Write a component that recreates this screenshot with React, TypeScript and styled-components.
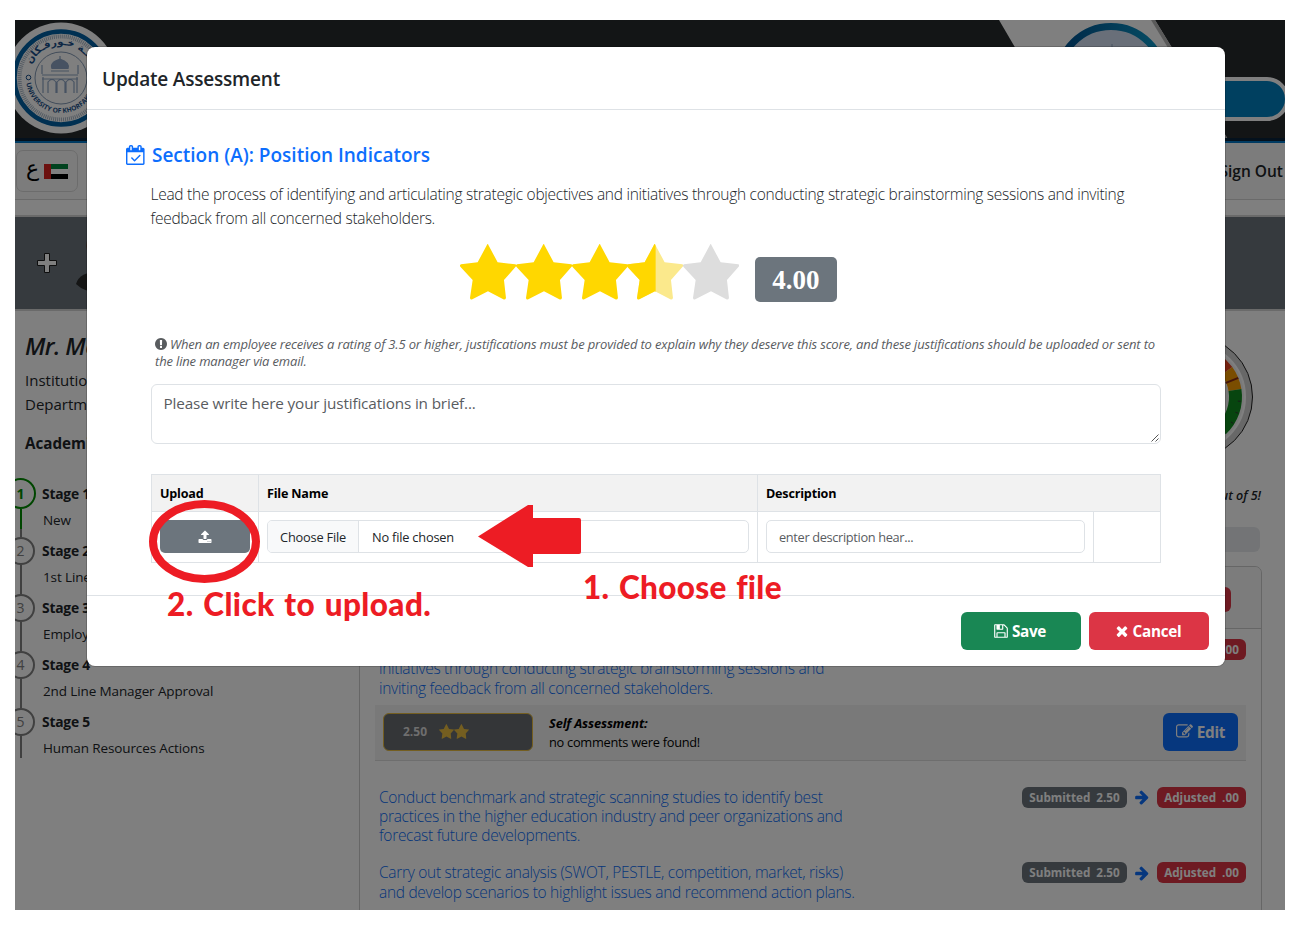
import React from "react";
import styled, { createGlobalStyle, css } from "styled-components";

const GlobalStyle = createGlobalStyle`
  *, *::before, *::after { box-sizing: border-box; }
  body {
    margin: 0;
    background: #fff;
    color: #212529;
    font-family: "Open Sans", "Noto Sans", sans-serif;
    font-size: 16px;
  }
  p, h1, h2, h3 { margin: 0; font-weight: 400; }
`;

/* ---------- icons ---------- */

const ICONS = {
  times:
    "M1490 1322q0 40-28 68l-136 136q-28 28-68 28t-68-28l-294-294-294 294q-28 28-68 28t-68-28l-136-136q-28-28-28-68t28-68l294-294-294-294q-28-28-28-68t28-68l136-136q28-28 68-28t68 28l294 294 294-294q28-28 68-28t68 28l136 136q28 28 28 68t-28 68l-294 294 294 294q28 28 28 68z",
  save:
    "M512 1536h768v-384h-768v384zm896 0h128v-896q0-14-10-38.5t-20-34.5l-281-281q-10-10-34-20t-39-10v416q0 40-28 68t-68 28h-576q-40 0-68-28t-28-68v-416h-128v1280h128v-416q0-40 28-68t68-28h832q40 0 68 28t28 68v416zm-384-928v-320q0-13-9.5-22.5t-22.5-9.5h-192q-13 0-22.5 9.5t-9.5 22.5v320q0 13 9.5 22.5t22.5 9.5h192q13 0 22.5-9.5t9.5-22.5zm640 32v928q0 40-28 68t-68 28h-1344q-40 0-68-28t-28-68v-1344q0-40 28-68t68-28h928q40 0 88 20t76 48l280 280q28 28 48 76t20 88z",
  upload:
    "M1344 1472q0-26-19-45t-45-19-45 19-19 45 19 45 45 19 45-19 19-45zm256 0q0-26-19-45t-45-19-45 19-19 45 19 45 45 19 45-19 19-45zm128-224v320q0 40-28 68t-68 28h-1472q-40 0-68-28t-28-68v-320q0-40 28-68t68-28h427q21 56 70.5 92t110.5 36h256q61 0 110.5-36t70.5-92h427q40 0 68 28t28 68zm-325-648q-17 40-59 40h-256v448q0 26-19 45t-45 19h-256q-26 0-45-19t-19-45v-448h-256q-42 0-59-40-17-39 14-69l448-448q18-19 45-19t45 19l448 448q31 30 14 69z",
  arrow:
    "M1600 960q0 54-37 91l-651 651q-39 37-91 37-51 0-90-37l-75-75q-38-38-38-91t38-91l293-293h-704q-52 0-84.5-37.5t-32.5-90.5v-128q0-53 32.5-90.5t84.5-37.5h704l-293-294q-38-36-38-90t38-90l75-75q38-38 90-38 53 0 91 38l651 651q37 35 37 90z",
  alert:
    "M896 128q209 0 385.5 103t279.5 279.5 103 385.5-103 385.5-279.5 279.5-385.5 103-385.5-103-279.5-279.5-103-385.5 103-385.5 279.5-279.5 385.5-103zm128 1247v-190q0-14-9-23.5t-22-9.5h-192q-13 0-23 10t-10 23v190q0 13 10 23t23 10h192q13 0 22-9.5t9-23.5zm-2-344l18-621q0-12-10-18-10-8-24-8h-220q-14 0-24 8-10 6-10 18l17 621q0 10 10 17.5t24 7.5h185q14 0 23.5-7.5t10.5-17.5z",
  edit:
    "M888 1184l116-116-152-152-116 116v56h96v96h56zm440-720q-16-16-33 1l-350 350q-17 17-1 33t33-1l350-350q17-17 1-33zm80 594v190q0 119-84.5 203.5t-203.5 84.5h-832q-119 0-203.5-84.5t-84.5-203.5v-832q0-119 84.5-203.5t203.5-84.5h832q63 0 117 25 15 7 18 23 3 17-9 29l-49 49q-14 14-32 8-23-6-45-6h-832q-66 0-113 47t-47 113v832q0 66 47 113t113 47h832q66 0 113-47t47-113v-126q0-13 9-22l64-64q15-15 35-7t20 29zm-96-738l288 288-672 672h-288v-288zm444 132l-92 92-288-288 92-92q28-28 68-28t68 28l152 152q28 28 28 68t-28 68z",
  calendar:
    "M1303 964l-512 512q-10 9-23 9t-23-9l-288-288q-9-10-9-23t9-22l46-46q9-9 22-9t23 9l220 220 444-444q10-9 23-9t22 9l46 46q9 9 9 22t-9 23zm-1175 700h1408v-1024h-1408v1024zm384-1216v-288q0-14-9-23t-23-9h-64q-14 0-23 9t-9 23v288q0 14 9 23t23 9h64q14 0 23-9t9-23zm768 0v-288q0-14-9-23t-23-9h-64q-14 0-23 9t-9 23v288q0 14 9 23t23 9h64q14 0 23-9t9-23zm384-64v1280q0 52-38 90t-90 38h-1408q-52 0-90-38t-38-90v-1280q0-52 38-90t90-38h128v-96q0-66 47-113t113-47h64q66 0 113 47t47 113v96h384v-96q0-66 47-113t113-47h64q66 0 113 47t47 113v96h128q52 0 90 38t38 90z",
};

const Glyph = styled.svg`
  display: block;
  flex: none;
  fill: currentColor;
`;

const Icon = ({ name, size }: { name: keyof typeof ICONS; size: number }) => (
  <Glyph width={size} height={size} viewBox="0 0 1792 1792">
    <path d={ICONS[name]} />
  </Glyph>
);

const STAR =
  "M83 0 Q85 1 86 4 L113 55 L166 61 Q171 63 167 68 L132 108 L138 162 Q136 168 130 166 L84 142 L37 166 Q31 168 30 162 L38 108 L1 68 Q-2 63 3 61 L53 55 L80 4 Q81 1 83 0 Z";

const Star = ({ w, left, right }: { w: number; left: string; right?: string }) => (
  <Glyph width={w} height={w * 0.99} viewBox="0 0 169 167">
    <path d={STAR} fill={right ?? left} />
    {right && (
      <svg width="86" height="167" viewBox="0 0 86 167">
        <path d={STAR} fill={left} />
      </svg>
    )}
  </Glyph>
);

/* ---------- page ---------- */

const Frame = styled.div`
  position: relative;
  width: 1270px;
  height: 890px;
  margin: 20px 0 0 15px;
  overflow: hidden;
  background: #fff;
`;

const Backdrop = styled.div`
  position: absolute;
  inset: 0;
  background: rgba(0, 0, 0, 0.5);
`;

const Banner = styled.header`
  height: 123px;
  background: #262a2d;
  border-bottom: 2px solid #0077c4;
  overflow: hidden;
`;

const Nav = styled.nav`
  display: flex;
  justify-content: space-between;
  height: 57px;
  padding: 7px 2px 0 1px;
  background: #f9f9f9;
  border-bottom: 1px solid #d4d4d4;
`;

const LangButton = styled.div`
  display: flex;
  align-items: center;
  gap: 5px;
  width: 62px;
  height: 42px;
  padding-left: 9px;
  border: 1px solid #d9d9d9;
  border-radius: 7px;
  color: #000;
  font: 22px "DejaVu Sans", sans-serif;
  line-height: 26px;
  span { padding-bottom: 5px; }
`;

const SignOut = styled.div`
  font-weight: 600;
  font-size: 15.5px;
  line-height: 43px;
`;

const Strip = styled.div`
  height: 96px;
  margin-top: 15px;
  background: #6c757d;
  border: solid #d4d4d4;
  border-width: 2px 0;
`;

const Columns = styled.div`
  display: flex;
`;

const Sidebar = styled.aside`
  width: 344px;
  flex: none;
  padding: 19px 0 0 10px;
`;

const Person = styled.h2`
  font-size: 23.8px;
  font-style: italic;
  font-weight: 600;
  line-height: 32px;
  letter-spacing: -0.6px;
`;

const Unit = styled.p`
  margin-top: 6px;
  font-size: 15px;
  line-height: 24px;
  white-space: nowrap;
`;

const Track = styled.p`
  margin-top: 14px;
  font-size: 15.2px;
  font-weight: 700;
  line-height: 26px;
  white-space: nowrap;
`;

const Stages = styled.div`
  margin: 24px 0 0 -19px;
`;

const StageRow = styled.div`
  display: flex;
  gap: 7px;
  height: 57px;
  &:last-child { height: 50px; }
`;

const StageRail = styled.div<{ $active?: boolean }>`
  display: flex;
  flex-direction: column;
  align-items: center;
  width: 29px;
  &::after {
    content: "";
    width: 2px;
    flex: 1;
    background: ${(p) =>
      p.$active ? "linear-gradient(#008c00 20px, #808080 20px)" : "#808080"};
  }
`;

const StageDot = styled.div<{ $active?: boolean }>`
  width: ${(p) => (p.$active ? 31 : 28)}px;
  height: ${(p) => (p.$active ? 31 : 28)}px;
  margin-top: ${(p) => (p.$active ? -2 : 0)}px;
  flex: none;
  border: 2px solid ${(p) => (p.$active ? "#008c00" : "#808080")};
  border-radius: 50%;
  color: ${(p) => (p.$active ? "#008c00" : "#808080")};
  font-size: 14px;
  font-weight: ${(p) => (p.$active ? 700 : 400)};
  line-height: ${(p) => (p.$active ? 27 : 24)}px;
  text-align: center;
`;

const StageText = styled.div`
  padding-top: 1px;
  font-size: 13.5px;
  line-height: 26px;
  white-space: nowrap;
  p { padding-left: 1px; letter-spacing: -0.12px; }
`;

const StageName = styled.h3`
  font-size: 13.8px;
  font-weight: 700;
  letter-spacing: -0.2px;
`;

const Main = styled.main`
  display: flex;
  flex-direction: column;
  align-items: flex-end;
  width: 903px;
  padding-top: 19px;
`;

const Gauge = styled.svg`
  display: block;
  margin: 0 6px 0 0;
`;

const Score = styled.p`
  margin: 21px 1px 0 0;
  font-size: 12.5px;
  font-style: italic;
  font-weight: 600;
  line-height: 22px;
`;

const Progress = styled.div`
  width: 880px;
  height: 25px;
  margin: 20px 2px 0 0;
  border-radius: 6px;
  background: #e6e9ec;
`;

const Card = styled.section`
  width: 903px;
  height: 400px;
  margin-top: 14px;
  border: 1px solid #ccc;
  border-radius: 7px;
`;

const CardHead = styled.div`
  display: flex;
  justify-content: flex-end;
  height: 62px;
  padding: 20px 30px 0 0;
  border-bottom: 1px solid #ccc;
  border-radius: 7px 7px 0 0;
  background: #f9f9f9;
`;

const Indicator = styled.div<{ $top: number }>`
  display: flex;
  justify-content: space-between;
  padding: ${(p) => p.$top}px 15px 0 19px;
`;

const Goal = styled.p`
  color: #0a6cf5;
  font-size: 15.5px;
  font-weight: 300;
  line-height: 19.3px;
  letter-spacing: -0.295px;
  white-space: pre;
`;

const Badges = styled.div`
  display: flex;
  align-items: center;
  gap: 7px;
  height: 21px;
  margin-top: -1px;
  color: #0d6efd;
`;

const Badge = styled.span<{ $red?: boolean; $w: number; $h?: number }>`
  width: ${(p) => p.$w}px;
  height: ${(p) => p.$h ?? 21}px;
  border-radius: 6px;
  background: ${(p) => (p.$red ? "#dc3545" : "#6c757d")};
  color: #fff;
  font-size: 11.7px;
  font-weight: 700;
  line-height: 21px;
  text-align: center;
  white-space: pre;
`;

const Assessment = styled.div`
  display: flex;
  height: 56px;
  margin: 7px 15px 0;
  padding: 8px;
  border-bottom: 1px solid #ddd;
  background: #f2f2f2;
`;

const RatingBox = styled.div`
  display: flex;
  align-items: center;
  gap: 12px;
  width: 150px;
  height: 38px;
  padding-left: 19px;
  border: 1px solid #e8bd40;
  border-radius: 6px;
  background: #696c70;
  color: #ddd;
  font-size: 12px;
  font-weight: 700;
`;

const StarPair = styled.span`
  display: flex;
`;

const Comment = styled.div`
  flex: 1;
  padding: 1px 0 0 16px;
  color: #000;
  font-size: 12.8px;
  line-height: 19px;
  letter-spacing: -0.27px;
  strong { display: block; font-style: italic; letter-spacing: -0.12px; }
`;

const button = css`
  display: flex;
  align-items: center;
  justify-content: center;
  height: 38px;
  border-radius: 6px;
  color: #fff;
  font-size: 15.3px;
  font-weight: 700;
  letter-spacing: -0.3px;
`;

const EditButton = styled.div`
  ${button}
  gap: 4px;
  width: 75px;
  background: #0d6efd;
`;

/* ---------- modal ---------- */

const Modal = styled.div`
  position: absolute;
  left: 72px;
  top: 27px;
  width: 1138px;
  height: 619px;
  display: flex;
  flex-direction: column;
  border-radius: 8px;
  background: #fff;
  box-shadow: 0 0 0 1px rgba(0, 0, 0, 0.175);
`;

const ModalTitle = styled.h1`
  height: 63px;
  padding: 1px 0 0 15px;
  border-bottom: 1px solid #dee2e6;
  font-size: 19px;
  font-weight: 600;
  line-height: 62px;
  letter-spacing: -0.2px;
`;

const ModalBody = styled.div`
  flex: 1;
  padding: 33px 64px 0;
`;

const SectionTitle = styled.h2`
  display: flex;
  align-items: center;
  gap: 6px;
  height: 24px;
  margin-left: -25px;
  color: #0d6efd;
  font-size: 19px;
  font-weight: 600;
  letter-spacing: -0.01px;
`;

const Description = styled.p`
  margin: 15px 0 0 -0.5px;
  font-size: 15.5px;
  font-weight: 300;
  line-height: 24px;
  letter-spacing: -0.267px;
  white-space: pre;
`;

const Rating = styled.div`
  display: flex;
  height: 58px;
  margin: 14px 0 0 309px;
`;

const StarSlot = styled.span`
  width: 55.8px;
`;

const RatingValue = styled.div`
  width: 82px;
  height: 45px;
  margin: 13px 0 0 16px;
  border-radius: 5px;
  background: #6c757d;
  color: #fff;
  font: 700 27px/46px "Liberation Serif", serif;
  text-align: center;
`;

const Note = styled.p`
  display: flex;
  gap: 2px;
  margin: 34px 0 0 4px;
  color: #595c5f;
  font-size: 13px;
  font-style: italic;
  line-height: 17px;
  letter-spacing: -0.155px;
  white-space: pre;
  svg { margin: 1px 0 0 -1px; }
`;

const NoteRest = styled(Note)`
  margin-top: 0;
`;

const Justification = styled.div`
  position: relative;
  height: 60px;
  margin-top: 14px;
  padding: 5px 11.5px;
  border: 1px solid #dee2e6;
  border-radius: 6px;
  color: #595c5f;
  font-size: 15.3px;
  line-height: 26px;
  letter-spacing: -0.15px;
`;

const ResizeGrip = styled.svg`
  position: absolute;
  right: 1px;
  bottom: 1px;
`;

const Table = styled.div`
  display: grid;
  grid-template-columns: 107px 499px 336px 67px;
  width: 1010px;
  margin-top: 30px;
  border: solid #dee2e6;
  border-width: 1px 0 0 1px;
`;

const Cell = styled.div`
  height: 51px;
  padding: 8px 8px 0;
  border: solid #dee2e6;
  border-width: 0 1px 1px 0;
`;

const HeadCell = styled(Cell)<{ $open?: boolean }>`
  height: 37px;
  padding-top: 0;
  border-right-width: ${(p) => (p.$open ? 0 : 1)}px;
  background: #f2f2f2;
  color: #000;
  font-size: 12.6px;
  font-weight: 700;
  line-height: 37px;
  letter-spacing: -0.2px;
`;

const UploadButton = styled.div`
  display: flex;
  align-items: center;
  justify-content: center;
  width: 90px;
  height: 33px;
  border-radius: 5px;
  background: #6c757d;
  color: #fff;
`;

const Field = styled.div`
  display: flex;
  height: 33px;
  border: 1px solid #dee2e6;
  border-radius: 5px;
  overflow: hidden;
  font-size: 12.8px;
  line-height: 33px;
  letter-spacing: -0.2px;
`;

const ChooseFile = styled.span`
  width: 91px;
  border-right: 1px solid #dee2e6;
  background: #f8f9fa;
  text-align: center;
`;

const FileName = styled.span`
  padding-left: 13px;
`;

const Hint = styled.span`
  padding-left: 12px;
  color: #595c5f;
  letter-spacing: -0.35px;
`;

const ModalFooter = styled.div`
  display: flex;
  justify-content: flex-end;
  gap: 8px;
  height: 71px;
  padding: 16px;
  border-top: 1px solid #dee2e6;
`;

const ActionButton = styled.div<{ $bg: string }>`
  ${button}
  gap: 3px;
  width: 120px;
  padding-right: 3px;
  background: ${(p) => p.$bg};
`;

/* ---------- annotations ---------- */

const Marks = styled.svg`
  position: absolute;
  left: 0;
  top: 0;
`;

const Callout = styled.div<{ $x: number; $y: number; $ls: number }>`
  position: absolute;
  left: ${(p) => p.$x}px;
  top: ${(p) => p.$y}px;
  color: #ed1c24;
  font: 900 31.5px/40px Lato, sans-serif;
  font-variant-ligatures: none;
  letter-spacing: ${(p) => p.$ls}px;
  word-spacing: 1.8px;
  white-space: nowrap;
`;

const BannerArt = () => (
  <svg width="1270" height="121" viewBox="15 20 1270 121">
    <defs>
      <path id="sealBottom" d="M26 78 A35 35 0 0 0 96 78" />
      <path id="sealTop" d="M28 78 A33 33 0 0 1 94 78" />
      <linearGradient id="ring" x1="0" x2="1">
        <stop offset="0" stopColor="#004f8f" />
        <stop offset="1" stopColor="#0c9ccb" />
      </linearGradient>
    </defs>
    <circle cx="61" cy="78" r="55.5" fill="#fff" />
    <circle cx="61" cy="78" r="46.5" fill="#fff" stroke="#0060a4" strokeWidth="4.5" />
    <circle cx="61" cy="78" r="41.5" fill="none" stroke="#a9b8c8" strokeWidth="4" strokeDasharray="1 1" />
    <circle cx="61" cy="78" r="26" fill="none" stroke="#8298b4" strokeWidth="1" />
    <text fill="#1a4f8a" fontSize="6.7" fontWeight="700" fontFamily="Open Sans">
      <textPath href="#sealBottom" startOffset="5">UNIVERSITY OF KHORFAKKAN</textPath>
    </text>
    <text fill="#1a4f8a" fontSize="10" fontWeight="700" fontFamily="DejaVu Sans">
      <textPath href="#sealTop" startOffset="57%" textAnchor="middle">جـامعـة خـورفـكان</textPath>
    </text>
    <circle cx="28.5" cy="77.5" r="2.3" fill="none" stroke="#1a4f8a" />
    <path d="M51.5 69q-3-7 8.500-10.500q11 3.500 8.500 10.500z" fill="#8ea5c4" />
    <path
      d="M60 56v4M51 71h18M42 75h36M43 77v16M48 93v-11q4-5 8 0v11M57 93v-11q4-5 8 0v11M66 93v-11q4-5 8 0v11M77 77v16M42 79h36M42 65v9M78 65v9"
      fill="none"
      stroke="#8ea5c4"
      strokeWidth="1.2"
    />
    <path d="M999 20H1155L1229 141H1070Z" fill="#fff" />
    <path d="M1151 20h4l74 121h-4z" fill="#b5b5b5" />
    <circle cx="1111" cy="79.5" r="53" fill="#d3dff2" stroke="url(#ring)" strokeWidth="7" />
    <path d="M1112 44v4" stroke="#8ea5c4" />
    <rect x="1100" y="79" width="187" height="40" rx="20" fill="#0080c0" stroke="#fff" strokeWidth="4" />
    <rect x="15" y="138" width="1270" height="3" fill="#08223a" />
  </svg>
);

const StripArt = () => (
  <svg width="90" height="92" viewBox="15 217 90 92">
    <path d="M44.5 253.5h5v7h7v5h-7v7h-5v-7h-7v-5h7z" fill="#fff" stroke="#1c1c1c" />
    <path d="M105 272q-25-2-29 12q10 10 29 8z" fill="#2b2b2b" />
    <path d="M88 238q-3 7 0 16z" fill="#6b3b22" />
  </svg>
);

const polar = (r: number, deg: number) => {
  const a = (deg * Math.PI) / 180;
  return `${191 + r * Math.cos(a)} ${397 + r * Math.sin(a)}`;
};

const band = (from: number, to: number) =>
  `M${polar(51, from)}A51 51 0 0 1 ${polar(51, to)}L${polar(38, to)}A38 38 0 0 0 ${polar(38, from)}Z`;

const GaugeDial = () => (
  <Gauge width="130" height="134" viewBox="126 330 130 134">
    <circle cx="191" cy="397" r="61.5" fill="#d0d0d0" stroke="#222" />
    <circle cx="191" cy="397" r="54" fill="#f2f2f2" stroke="#fff" strokeWidth="2" />
    <path d={band(-120, -36)} fill="#e8401c" />
    <path d={band(-36, -9)} fill="#f59a00" />
    <path d={band(-9, 47)} fill="#0e8a1e" />
    <path d={`M191 397L${polar(51, -22)}`} stroke="#8a2a12" strokeWidth="2" />
    <path
      d={`M${polar(47, 5)}L${polar(50, 5)}M${polar(47, 19)}L${polar(50, 19)}M${polar(47, 32)}L${polar(50, 32)}`}
      stroke="#333"
    />
    <circle cx="191" cy="397" r="37.5" fill="#ededed" />
  </Gauge>
);

const STAGES = [
  ["Stage 1", "New"],
  ["Stage 2", "1st Line Manager Approval"],
  ["Stage 3", "Employee Approval"],
  ["Stage 4", "2nd Line Manager Approval"],
  ["Stage 5", "Human Resources Actions"],
];

const ScoreBadges = () => (
  <Badges>
    <Badge $w={105}>{"Submitted  2.50"}</Badge>
    <Icon name="arrow" size={16} />
    <Badge $red $w={89}>{"Adjusted  .00"}</Badge>
  </Badges>
);

export default function App() {
  return (
    <>
      <GlobalStyle />
      <Frame>
        <Banner>
          <BannerArt />
        </Banner>
        <Nav>
          <LangButton>
            <span>ع</span>
            <svg width="24" height="15">
              <rect width="24" height="5" fill="#00843d" />
              <rect y="5" width="24" height="5" fill="#fff" />
              <rect y="10" width="24" height="5" fill="#000" />
              <rect width="7" height="15" fill="#d8231f" />
            </svg>
          </LangButton>
          <SignOut>Sign Out</SignOut>
        </Nav>
        <Strip>
          <StripArt />
        </Strip>
        <Columns>
          <Sidebar>
            <Person>Mr. Mo</Person>
            <Unit>
              Institution
              <br />
              Department
            </Unit>
            <Track>Academic</Track>
            <Stages>
              {STAGES.map(([name, text], i) => (
                <StageRow key={name}>
                  <StageRail $active={i === 0}>
                    <StageDot $active={i === 0}>{i + 1}</StageDot>
                  </StageRail>
                  <StageText>
                    <StageName>{name}</StageName>
                    <p>{text}</p>
                  </StageText>
                </StageRow>
              ))}
            </Stages>
          </Sidebar>
          <Main>
            <GaugeDial />
            <Score>out of 5!</Score>
            <Progress />
            <Card>
              <CardHead>
                <Badge $red $w={89} $h={25}> </Badge>
              </CardHead>
              <Indicator $top={11}>
                <Goal>
                  {"Lead the process of identifying and articulating strategic\ninitiatives through conducting strategic brainstorming sessions and\ninviting feedback from all concerned stakeholders."}
                </Goal>
                <ScoreBadges />
              </Indicator>
              <Assessment>
                <RatingBox>
                  2.50
                  <StarPair>
                    <Star w={15} left="#e8bd40" />
                    <Star w={15} left="#e8bd40" />
                  </StarPair>
                </RatingBox>
                <Comment>
                  <strong>Self Assessment:</strong>
                  no comments were found!
                </Comment>
                <EditButton>
                  <Icon name="edit" size={17} />
                  Edit
                </EditButton>
              </Assessment>
              <Indicator $top={27}>
                <Goal>
                  {"Conduct benchmark and strategic scanning studies to identify best\npractices in the higher education industry and peer organizations and\nforecast future developments."}
                </Goal>
                <ScoreBadges />
              </Indicator>
              <Indicator $top={17.5}>
                <Goal>
                  {"Carry out strategic analysis (SWOT, PESTLE, competition, market, risks)\nand develop scenarios to highlight issues and recommend action plans."}
                </Goal>
                <ScoreBadges />
              </Indicator>
            </Card>
          </Main>
        </Columns>

        <Backdrop />

        <Modal>
          <ModalTitle>Update Assessment</ModalTitle>
          <ModalBody>
            <SectionTitle>
              <Icon name="calendar" size={20} />
              Section (A): Position Indicators
            </SectionTitle>
            <Description>
              {"Lead the process of identifying and articulating strategic objectives and initiatives through conducting strategic brainstorming sessions and inviting\nfeedback from all concerned stakeholders."}
            </Description>
            <Rating>
              {["#ffd700", "#ffd700", "#ffd700"].map((c, i) => (
                <StarSlot key={i}>
                  <Star w={56.3} left={c} />
                </StarSlot>
              ))}
              <StarSlot>
                <Star w={56.3} left="#ffd700" right="#fbe98c" />
              </StarSlot>
              <StarSlot>
                <Star w={56.3} left="#ddd" />
              </StarSlot>
              <RatingValue>4.00</RatingValue>
            </Rating>
            <Note>
              <Icon name="alert" size={14} />
              <span>
                When an employee receives a rating of 3.5 or higher, justifications must be provided to explain why they deserve this score, and these justifications should be uploaded or sent to
              </span>
            </Note>
            <NoteRest>
              <span>the line manager via email.</span>
            </NoteRest>
            <Justification>
              Please write here your justifications in brief...
              <ResizeGrip width="8" height="8" viewBox="0 0 8 8">
                <path d="M0.500 7.500L7.500 0.500M4.500 7.500L7.500 4.500" stroke="#555" fill="none" />
              </ResizeGrip>
            </Justification>
            <Table>
              <HeadCell>Upload</HeadCell>
              <HeadCell>File Name</HeadCell>
              <HeadCell $open>Description</HeadCell>
              <HeadCell />
              <Cell>
                <UploadButton>
                  <Icon name="upload" size={14} />
                </UploadButton>
              </Cell>
              <Cell>
                <Field>
                  <ChooseFile>Choose File</ChooseFile>
                  <FileName>No file chosen</FileName>
                </Field>
              </Cell>
              <Cell>
                <Field>
                  <Hint>enter description hear...</Hint>
                </Field>
              </Cell>
              <Cell />
            </Table>
          </ModalBody>
          <ModalFooter>
            <ActionButton $bg="#198754">
              <Icon name="save" size={16} />
              Save
            </ActionButton>
            <ActionButton $bg="#dc3545">
              <Icon name="times" size={16} />
              Cancel
            </ActionButton>
          </ModalFooter>
        </Modal>

        <Marks width="1270" height="890" viewBox="15 20 1270 890">
          <ellipse cx="204.5" cy="541.5" rx="51.5" ry="37.5" fill="none" stroke="#ed1c24" strokeWidth="8" />
          <path d="M478 536.500L528 505h5v13h46q2 0 2 2v32q0 2-2 2h-46v13h-5z" fill="#ed1c24" />
        </Marks>
        <Callout $x={152} $y={564} $ls={0.4}>2. Click to upload.</Callout>
        <Callout $x={568} $y={547} $ls={0.3}>1. Choose file</Callout>
      </Frame>
    </>
  );
}
